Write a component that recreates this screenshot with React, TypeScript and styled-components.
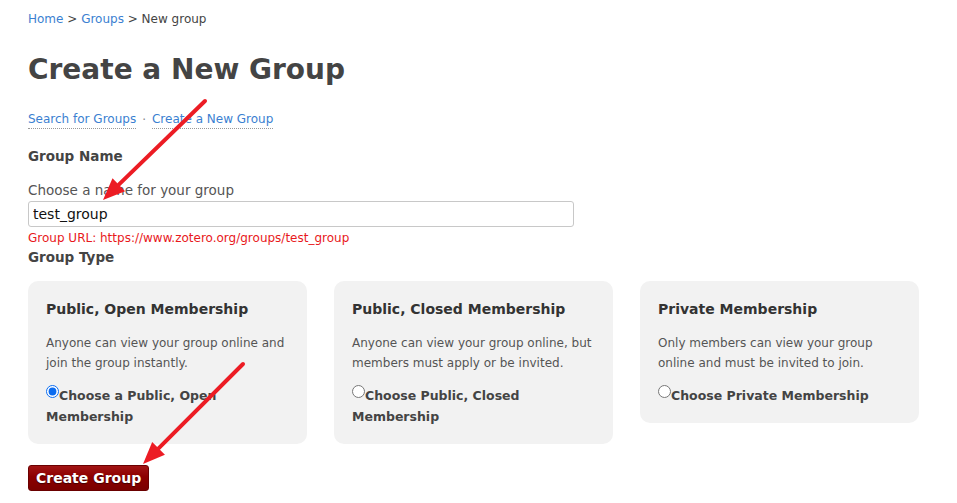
import { FC } from 'react';
import styled, { createGlobalStyle } from 'styled-components';

const GlobalStyle = createGlobalStyle`
  body {
    margin: 0;
    background: #fff;
    font-family: 'DejaVu Sans', Verdana, sans-serif;
    color: #444;
  }
`;

const Page = styled.div`
  position: relative;
  padding: 11px 28px 0 28px;
  width: 957px;
  height: 503px;
  box-sizing: border-box;
  overflow: hidden;
`;

const Breadcrumb = styled.nav`
  font-size: 12px;
  line-height: 16px;
  color: #444;
`;

const Crumb = styled.a`
  color: #3b7fd1;
  text-decoration: none;
`;

const Title = styled.h1`
  margin: 26px 0 0;
  font-size: 28px;
  line-height: 34px;
  font-weight: bold;
  color: #444;
`;

const SubNav = styled.div`
  margin-top: 24px;
  display: flex;
  align-items: center;
  gap: 6px;
  font-size: 12px;
  line-height: 16px;
  color: #888;
`;

const SubLink = styled.a`
  color: #3b7fd1;
  text-decoration: none;
  border-bottom: 1px dotted #999;
  padding-bottom: 1px;
`;

const SectionLabel = styled.div<{ $top: number }>`
  margin-top: ${({ $top }) => $top}px;
  font-size: 13.5px;
  line-height: 18px;
  font-weight: bold;
  color: #444;
`;

const FieldHint = styled.div`
  margin-top: 16px;
  font-size: 13.5px;
  line-height: 18px;
  color: #555;
`;

const TextInput = styled.input`
  display: block;
  box-sizing: border-box;
  width: 546px;
  height: 26px;
  margin: 2px 0 0;
  padding: 0 4px;
  border: 1px solid #c8c8c8;
  border-radius: 3px;
  font-family: 'DejaVu Sans', Verdana, sans-serif;
  font-size: 14px;
  color: #111;
  outline: none;
`;

const UrlNote = styled.div`
  margin-top: 3px;
  font-size: 12px;
  line-height: 16px;
  color: #e8191c;
`;

const CardRow = styled.div`
  margin-top: 15px;
  display: flex;
  align-items: flex-start;
  gap: 27px;
`;

const Card = styled.div`
  box-sizing: border-box;
  width: 279px;
  padding: 18px 18px 17px;
  background: #f2f2f2;
  border-radius: 10px;
`;

const CardTitle = styled.h3`
  margin: 0;
  font-size: 14px;
  line-height: 20px;
  font-weight: bold;
  color: #333;
`;

const CardText = styled.p`
  margin: 14px 0 0;
  font-size: 12px;
  line-height: 20px;
  color: #555;
`;

const Choice = styled.label`
  display: block;
  margin-top: 12px;
  font-size: 12.5px;
  line-height: 21px;
  font-weight: bold;
  color: #444;
`;

const Radio = styled.input`
  margin: 0;
  width: 13px;
  height: 13px;
  vertical-align: 2px;
  accent-color: #0b6cf0;
`;

const SubmitButton = styled.button`
  margin-top: 21px;
  display: block;
  height: 26px;
  padding: 0 7px;
  border: 1px solid #6a0000;
  border-radius: 3px;
  background: linear-gradient(#a11414 0%, #8c0000 45%, #7a0000 100%);
  color: #fff;
  font-family: 'DejaVu Sans', Verdana, sans-serif;
  font-size: 14px;
  font-weight: bold;
  text-shadow: 0 1px 1px rgba(0, 0, 0, 0.5);
`;

const Overlay = styled.svg`
  position: absolute;
  left: 0;
  top: 0;
  pointer-events: none;
`;

type MembershipOption = {
  title: string;
  text: string;
  choice: string;
  checked: boolean;
};

const options: MembershipOption[] = [
  {
    title: 'Public, Open Membership',
    text: 'Anyone can view your group online and join the group instantly.',
    choice: 'Choose a Public, Open Membership',
    checked: true,
  },
  {
    title: 'Public, Closed Membership',
    text: 'Anyone can view your group online, but members must apply or be invited.',
    choice: 'Choose Public, Closed Membership',
    checked: false,
  },
  {
    title: 'Private Membership',
    text: 'Only members can view your group online and must be invited to join.',
    choice: 'Choose Private Membership',
    checked: false,
  },
];

const Arrow: FC<{ x1: number; y1: number; x2: number; y2: number }> = ({ x1, y1, x2, y2 }) => {
  const ang = Math.atan2(y2 - y1, x2 - x1);
  const len = 22;
  const half = 9;
  const bx = x2 - Math.cos(ang) * len;
  const by = y2 - Math.sin(ang) * len;
  const px = -Math.sin(ang) * half;
  const py = Math.cos(ang) * half;
  return (
    <g>
      <line x1={x1} y1={y1} x2={bx} y2={by} stroke="#ec1c24" strokeWidth={4} strokeLinecap="round" />
      <polygon points={`${x2},${y2} ${bx + px},${by + py} ${bx - px},${by - py}`} fill="#ec1c24" />
    </g>
  );
};

const App: FC = () => (
  <Page>
    <GlobalStyle />
    <Breadcrumb>
      <Crumb href="#">Home</Crumb> &gt; <Crumb href="#">Groups</Crumb> &gt; New group
    </Breadcrumb>
    <Title>Create a New Group</Title>
    <SubNav>
      <SubLink href="#">Search for Groups</SubLink>
      <span>·</span>
      <SubLink href="#">Create a New Group</SubLink>
    </SubNav>
    <SectionLabel $top={18}>Group Name</SectionLabel>
    <FieldHint>Choose a name for your group</FieldHint>
    <TextInput defaultValue="test_group" />
    <UrlNote>Group URL: https://www.zotero.org/groups/test_group</UrlNote>
    <SectionLabel $top={2}>Group Type</SectionLabel>
    <CardRow>
      {options.map((o) => (
        <Card key={o.title}>
          <CardTitle>{o.title}</CardTitle>
          <CardText>{o.text}</CardText>
          <Choice>
            <Radio type="radio" name="type" defaultChecked={o.checked} />
            {o.choice}
          </Choice>
        </Card>
      ))}
    </CardRow>
    <SubmitButton>Create Group</SubmitButton>
    <Overlay width={957} height={503}>
      <Arrow x1={205} y1={101} x2={103} y2={200} />
      <Arrow x1={243} y1={364} x2={143} y2={464} />
    </Overlay>
  </Page>
);

export default App;
